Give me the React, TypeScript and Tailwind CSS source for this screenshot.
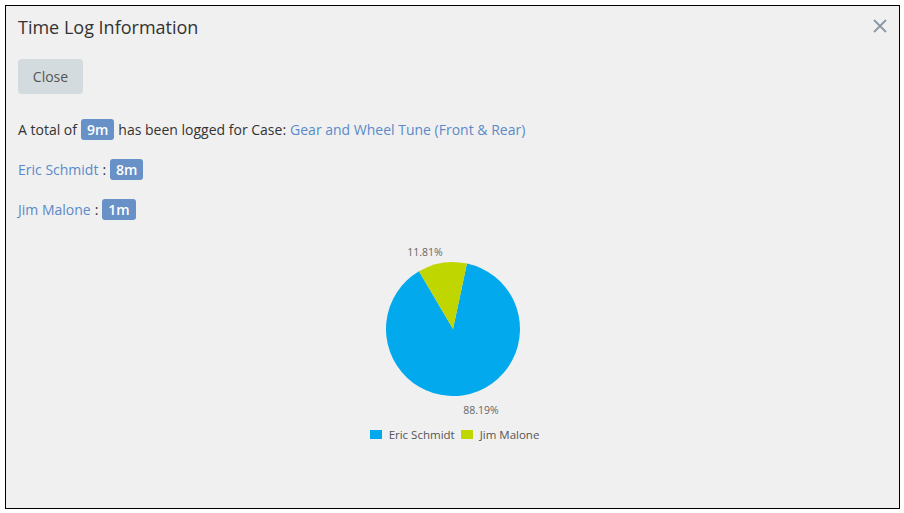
import React from "react";

const font = { fontFamily: '"Open Sans", "Liberation Sans", sans-serif' };

interface Slice {
  name: string;
  value: number;
  color: string;
}

const slices: Slice[] = [
  { name: "Eric Schmidt", value: 88.19, color: "#02a9ed" },
  { name: "Jim Malone", value: 11.81, color: "#bfd600" },
];

// angle in degrees, clockwise from top
const pt = (cx: number, cy: number, r: number, a: number) => {
  const rad = (a * Math.PI) / 180;
  return [cx + r * Math.sin(rad), cy - r * Math.cos(rad)];
};

const arc = (cx: number, cy: number, r: number, a0: number, a1: number) => {
  const [x0, y0] = pt(cx, cy, r, a0);
  const [x1, y1] = pt(cx, cy, r, a1);
  const large = a1 - a0 > 180 ? 1 : 0;
  return `M${cx},${cy} L${x0},${y0} A${r},${r} 0 ${large} 1 ${x1},${y1} Z`;
};

const PieChart: React.FC = () => {
  const start = -30.5;
  const jim = (slices[1].value / 100) * 360;
  return (
    <div className="flex flex-col items-center">
      <svg width="200" height="185" viewBox="0 0 200 185">
        <path d={arc(100, 95, 67, start + jim, start + 360)} fill={slices[0].color} />
        <path d={arc(100, 95, 67, start, start + jim)} fill={slices[1].color} />
        <text x="72" y="22" fontSize="10.5" fill="#666" textAnchor="middle" style={font}>
          11.81%
        </text>
        <text x="128" y="180" fontSize="10.5" fill="#666" textAnchor="middle" style={font}>
          88.19%
        </text>
      </svg>
      <div className="flex items-center gap-[6px] mt-[7px] ml-[4px] text-[11.5px] text-[#555]" style={font}>
        {slices.map((s) => (
          <div key={s.name} className="flex items-center gap-[7px]">
            <span className="w-[12px] h-[9px]" style={{ backgroundColor: s.color }}></span>
            <span>{s.name}</span>
          </div>
        ))}
      </div>
    </div>
  );
};

const Badge: React.FC<{ children: React.ReactNode }> = ({ children }) => (
  <span className="inline-flex items-center h-[21px] px-[6px] rounded-[3px] bg-[#6891c7] text-white font-semibold text-[14px] leading-none">
    {children}
  </span>
);

export default function App() {
  return (
    <div className="w-[904px] h-[513px] bg-white pt-[5px] pl-[5px] pr-[4px] pb-[4px]" style={font}>
      <div className="h-full border border-black bg-[#f0f0f0] px-[12px] text-[#333]">
        <div className="flex items-center justify-between h-[42px]">
          <h1 className="text-[18px] text-[#333]">Time Log Information</h1>
          <svg width="14" height="14" viewBox="0 0 14 14" className="mt-[-2px]">
            <path d="M1 1 L13 13 M13 1 L1 13" stroke="#8a97a3" strokeWidth="1.8" />
          </svg>
        </div>
        <button className="mt-[11px] h-[35px] w-[65px] rounded-[4px] bg-[#d3dbde] text-[14px] text-[#555]">
          Close
        </button>
        <div className="mt-[25px] text-[14px] flex flex-col gap-[19px]">
          <div className="flex items-center gap-[4px] h-[21px]">
            <span>A total of</span>
            <Badge>9m</Badge>
            <span>has been logged for Case:</span>
            <span className="text-[#5b8ac8]">Gear and Wheel Tune (Front &amp; Rear)</span>
          </div>
          <div className="flex items-center gap-[4px] h-[21px]">
            <span className="text-[#5b8ac8]">Eric Schmidt</span>
            <span>:</span>
            <Badge>8m</Badge>
          </div>
          <div className="flex items-center gap-[4px] h-[21px]">
            <span className="text-[#5b8ac8]">Jim Malone</span>
            <span>:</span>
            <Badge>1m</Badge>
          </div>
        </div>
        <div className="mt-[14px] flex justify-center">
          <PieChart />
        </div>
      </div>
    </div>
  );
}
